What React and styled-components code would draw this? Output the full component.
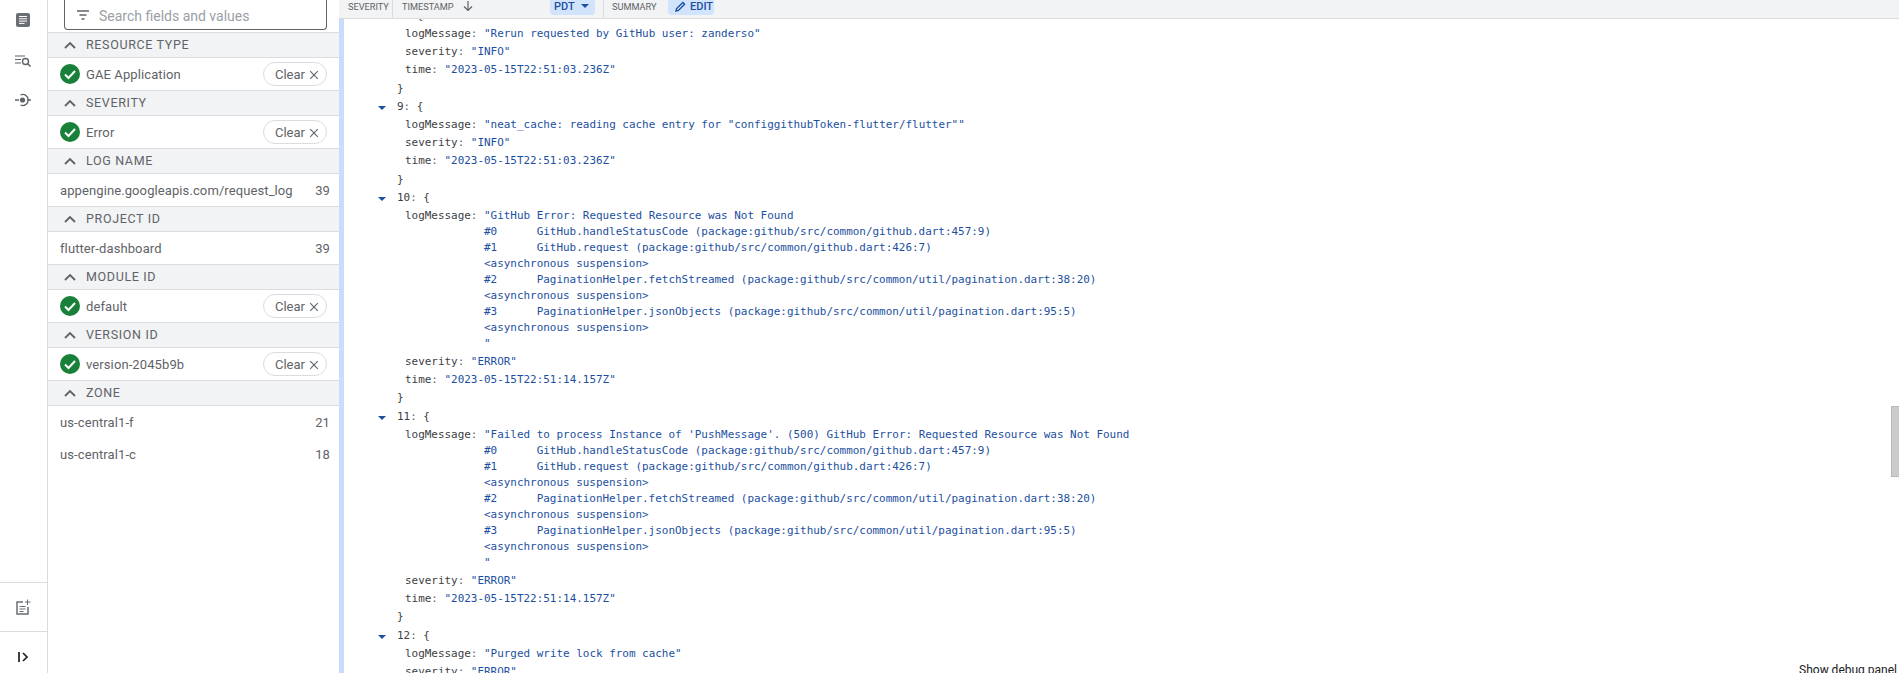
import React from 'react';
import styled, { createGlobalStyle } from 'styled-components';

const GlobalStyle = createGlobalStyle`
  html, body {
    margin: 0;
    height: 100%;
    overflow: hidden;
    background: #fff;
    font-family: Roboto, "Liberation Sans", sans-serif;
  }
  * { box-sizing: border-box; }
`

const Page = styled.div`
  position: relative;
  display: flex;
  width: 1899px;
  height: 673px;
  overflow: hidden;
`
const Rail = styled.nav`
  width: 48px;
  flex: none;
  display: flex;
  flex-direction: column;
  border-right: 1.5px solid #dadce0;
`
const RailIcon = styled.div`
  height: ${p => p.$h}px;
  display: flex;
  align-items: center;
  justify-content: center;
  padding-right: 1px;
  padding-top: ${p => p.$pt || 0}px;
  border-top: ${p => (p.$line ? '1px solid #dadce0' : 'none')};
`
const RailSpacer = styled.div`
  flex: 1;
`
const Panel = styled.aside`
  width: 291px;
  flex: none;
  display: flex;
  flex-direction: column;
`
const SearchWrap = styled.div`
  height: 32px;
  padding: 0 12px 2px 16px;
  flex: none;
`
const SearchBox = styled.div`
  height: 30px;
  border: 1px solid #5f6368;
  border-top: none;
  border-radius: 0 0 4px 4px;
  display: flex;
  align-items: center;
  padding-left: 11px;
  gap: 9px;
  color: #5f6368;
`
const SearchText = styled.span`
  font-size: 14px;
  color: #9aa0a6;
  padding-top: 2px;
`
const SectionHead = styled.div`
  height: 26px;
  background: #f1f3f4;
  border-top: 1px solid #dadce0;
  border-bottom: 1px solid #dadce0;
  display: flex;
  align-items: center;
  padding-left: 15px;
  gap: 9px;
  font-size: 12.5px;
  letter-spacing: 0.65px;
  color: #5f6368;
`
const HeadTitle = styled.span`
  margin-bottom: 2px;
`
const Row = styled.div`
  height: 32px;
  display: flex;
  align-items: center;
  padding: 0 ${p => (p.$count ? '9px' : '12px')} 0 12px;
  font-size: 13px;
  letter-spacing: 0.1px;
  color: #5f6368;
  gap: 6px;
`
const RowLabel = styled.span`
  flex: 1;
  white-space: nowrap;
`
const Count = styled.span`
  font-size: 13px;
`
const CheckIcon = styled.svg`
  flex: none;
`
const ClearChip = styled.div`
  width: 64px;
  height: 24px;
  border: 1px solid #dadce0;
  border-radius: 12px;
  display: flex;
  align-items: center;
  padding-left: 11px;
  gap: 4px;
  font-size: 13px;
  letter-spacing: 0;
  color: #5f6368;
`
const ClearX = styled.svg`
  margin-top: 2px;
`
const Main = styled.main`
  flex: 1;
  min-width: 0;
  display: flex;
  flex-direction: column;
`
const Toolbar = styled.div`
  height: 19px;
  flex: none;
  background: #f1f3f4;
  border-bottom: 1px solid #dadce0;
  display: flex;
  align-items: flex-start;
  font-size: 9.2px;
  color: #5f6368;
`
const ToolCell = styled.div`
  height: 18px;
  display: flex;
  align-items: center;
  gap: ${p => p.$gap || 0}px;
  width: ${p => p.$w}px;
  padding-left: ${p => p.$pl || 0}px;
  padding-bottom: 6px;
  border-right: ${p => (p.$line ? '1px solid #dadce0' : 'none')};
  flex: none;
`
const BluePill = styled.div`
  height: 15px;
  padding: 0 0 3px ${p => p.$pl}px;
  width: ${p => p.$w}px;
  background: #d2e3fc;
  border-radius: 0 0 4px 4px;
  display: flex;
  align-items: center;
  gap: ${p => p.$gap}px;
  color: #1c4fa0;
  font-size: 11px;
  font-weight: 500;
  flex: none;
`
const LogArea = styled.div`
  flex: 1;
  min-height: 0;
  overflow: hidden;
  border-left: 5px solid #c9dcfb;
  padding-top: 6px;
  font-family: "DejaVu Sans Mono", "Liberation Mono", monospace;
  font-size: 10.95px;
  color: #3c4043;
`
const Line = styled.div`
  height: 18.2px;
  line-height: 18.2px;
  white-space: pre;
  padding-left: ${p => (p.$indent === 'key' ? 61 : 53)}px;
  position: relative;
  margin-top: ${p => (p.$clipped ? '-18.2px' : '0')};
`
const Arrow = styled.i`
  position: absolute;
  left: 34px;
  top: 8px;
  width: 0;
  height: 0;
  border-left: 4px solid transparent;
  border-right: 4px solid transparent;
  border-top: 4px solid #1c4fa0;
`
const Colon = styled.span`
  color: #5f6368;
`
const Str = styled.span`
  color: #1c4fa0;
`
const MultiValue = styled.div`
  margin-left: 140px;
  margin-top: -1px;
  margin-bottom: 1px;
  color: #1c4fa0;
  white-space: pre;
  line-height: 16px;
`
const ScrollThumb = styled.div`
  position: absolute;
  right: 0;
  top: 406px;
  width: 8px;
  height: 71px;
  background: #cbcbcb;
  border: 1px solid #b9b9b9;
  border-right: none;
`
const DebugLink = styled.div`
  position: absolute;
  right: 2px;
  top: 662px;
  font-size: 12px;
  color: #202124;
  line-height: 16px;
  white-space: nowrap;
`

const Chevron = () => (
  <svg width="14" height="12" viewBox="0 0 14 12">
    <path d="M2 9 L7 4 L12 9" fill="none" stroke="#5f6368" strokeWidth="1.8" />
  </svg>
)

const Check = () => (
  <CheckIcon width="20" height="20" viewBox="0 0 20 20">
    <circle cx="10" cy="10" r="10" fill="#188038" />
    <path d="M5 10.5 L8.5 14 L15 7" fill="none" stroke="#fff" strokeWidth="2" />
  </CheckIcon>
)

const Clear = () => (
  <ClearChip>
    Clear
    <ClearX width="10" height="10" viewBox="0 0 10 10">
      <path d="M1.2 1.2 L8.8 8.8 M8.8 1.2 L1.2 8.8" stroke="#5f6368" strokeWidth="1.1" />
    </ClearX>
  </ClearChip>
)

const Section = ({ title, rows }) => (
  <>
    <SectionHead>
      <Chevron />
      <HeadTitle>{title}</HeadTitle>
    </SectionHead>
    {rows.map(r => (
      <Row key={r.label} $count={r.count}>
        {r.checked && <Check />}
        <RowLabel>{r.label}</RowLabel>
        {r.count ? <Count>{r.count}</Count> : <Clear />}
      </Row>
    ))}
  </>
)

const sections = [
  { title: 'RESOURCE TYPE', rows: [{ label: 'GAE Application', checked: true }] },
  { title: 'SEVERITY', rows: [{ label: 'Error', checked: true }] },
  { title: 'LOG NAME', rows: [{ label: 'appengine.googleapis.com/request_log', count: 39 }] },
  { title: 'PROJECT ID', rows: [{ label: 'flutter-dashboard', count: 39 }] },
  { title: 'MODULE ID', rows: [{ label: 'default', checked: true }] },
  { title: 'VERSION ID', rows: [{ label: 'version-2045b9b', checked: true }] },
  {
    title: 'ZONE',
    rows: [
      { label: 'us-central1-f', count: 21 },
      { label: 'us-central1-c', count: 18 },
    ],
  },
]

const trace = `#0      GitHub.handleStatusCode (package:github/src/common/github.dart:457:9)
#1      GitHub.request (package:github/src/common/github.dart:426:7)
<asynchronous suspension>
#2      PaginationHelper.fetchStreamed (package:github/src/common/util/pagination.dart:38:20)
<asynchronous suspension>
#3      PaginationHelper.jsonObjects (package:github/src/common/util/pagination.dart:95:5)
<asynchronous suspension>
"`

const Prop = ({ name, value }) => (
  <Line $indent="key">
    {name}
    <Colon>: </Colon>
    <Str>{value}</Str>
  </Line>
)

const Head = ({ n, clipped }) => (
  <Line $clipped={clipped}>
    <Arrow />
    {n}
    <Colon>: </Colon>
    {'{'}
  </Line>
)

const Close = () => <Line>{'}'}</Line>

const Entry = ({ n, message, multi, severity, time }) => (
  <>
    <Head n={n} />
    <Prop name="logMessage" value={message} />
    {multi && <MultiValue>{trace}</MultiValue>}
    <Prop name="severity" value={severity} />
    <Prop name="time" value={time} />
    <Close />
  </>
)

export default function App() {
  return (
    <Page>
      <GlobalStyle />
      <Rail>
        <RailIcon $h={40}>
          <svg width="16" height="16" viewBox="0 0 16 16">
            <rect x="1" y="1" width="14" height="14" rx="2" fill="#6b6f73" />
            <path d="M4 4.5 H12 M4 6.8 H12 M4 9.1 H12 M4 11.4 H9.5" stroke="#fff" strokeWidth="1" />
          </svg>
        </RailIcon>
        <RailIcon $h={41}>
          <svg width="18" height="14" viewBox="0 0 18 14">
            <path d="M1 2 H11 M1 5.5 H7 M1 9 H7" stroke="#5f6368" strokeWidth="1.2" />
            <circle cx="11.5" cy="7.5" r="3" fill="none" stroke="#5f6368" strokeWidth="1.4" />
            <path d="M13.7 9.7 L16.5 12.5" stroke="#5f6368" strokeWidth="1.6" />
          </svg>
        </RailIcon>
        <RailIcon $h={38}>
          <svg width="18" height="16" viewBox="0 0 18 16">
            <path d="M1 8 H5 M13 8 H17" stroke="#5f6368" strokeWidth="1.3" />
            <path d="M6.5 3 A5.5 5.5 0 1 1 6.5 13" fill="none" stroke="#5f6368" strokeWidth="1.3" />
            <circle cx="8.5" cy="8" r="2.6" fill="#5f6368" />
          </svg>
        </RailIcon>
        <RailSpacer />
        <RailIcon $h={49} $line>
          <svg width="16" height="17" viewBox="0 0 16 17">
            <path d="M8 3 H2 V15 H13 V8" fill="none" stroke="#6b6f73" strokeWidth="1.5" />
            <path d="M4.5 7.5 H10.5 M4.5 10 H10.5 M4.5 12.5 H8.5" stroke="#6b6f73" strokeWidth="1.2" />
            <path d="M12.5 0.5 V6 M10 3 H15.5" stroke="#6b6f73" strokeWidth="1" />
          </svg>
        </RailIcon>
        <RailIcon $h={42} $pt={8} $line>
          <svg width="10" height="10" viewBox="0 0 10 10">
            <path d="M1 0 V10" stroke="#3c4043" strokeWidth="2" />
            <path d="M5 1 L9 5 L5 9" fill="none" stroke="#202124" strokeWidth="1.7" />
          </svg>
        </RailIcon>
      </Rail>
      <Panel>
        <SearchWrap>
          <SearchBox>
            <svg width="14" height="10" viewBox="0 0 14 10">
              <path d="M1 1 H13 M3.5 5 H10.5 M5.5 9 H8.5" stroke="#5f6368" strokeWidth="1.4" />
            </svg>
            <SearchText>Search fields and values</SearchText>
          </SearchBox>
        </SearchWrap>
        {sections.map(s => (
          <Section key={s.title} {...s} />
        ))}
      </Panel>
      <Main>
        <Toolbar>
          <ToolCell $w={54} $pl={9} $line>SEVERITY</ToolCell>
          <ToolCell $w={157} $pl={9} $gap={8}>
            TIMESTAMP
            <svg width="12" height="12" viewBox="0 0 12 12">
              <path d="M6 1 V10.5 M2 6.5 L6 10.5 L10 6.5" fill="none" stroke="#5f6368" strokeWidth="1.2" />
            </svg>
          </ToolCell>
          <BluePill $w={45} $pl={4} $gap={6}>
            PDT
            <svg width="8" height="4" viewBox="0 0 8 4">
              <path d="M0 0 H8 L4 4 Z" fill="#1c4fa0" />
            </svg>
          </BluePill>
          <ToolCell $w={9} $line />
          <ToolCell $w={64} $pl={8}>SUMMARY</ToolCell>
          <BluePill $w={46} $pl={7} $gap={4}>
            <svg width="11" height="11" viewBox="0 0 11 11">
              <path d="M1 10 L1.6 7.6 L7.8 1.4 L9.6 3.2 L3.4 9.4 Z" fill="none" stroke="#1c4fa0" strokeWidth="1.4" />
            </svg>
            EDIT
          </BluePill>
        </Toolbar>
        <LogArea>
          <Head n="8" clipped />
          <Prop name="logMessage" value={'"Rerun requested by GitHub user: zanderso"'} />
          <Prop name="severity" value={'"INFO"'} />
          <Prop name="time" value={'"2023-05-15T22:51:03.236Z"'} />
          <Close />
          <Entry
            n="9"
            message={'"neat_cache: reading cache entry for "configgithubToken-flutter/flutter""'}
            severity={'"INFO"'}
            time={'"2023-05-15T22:51:03.236Z"'}
          />
          <Entry
            n="10"
            message={'"GitHub Error: Requested Resource was Not Found'}
            multi
            severity={'"ERROR"'}
            time={'"2023-05-15T22:51:14.157Z"'}
          />
          <Entry
            n="11"
            message={`"Failed to process Instance of 'PushMessage'. (500) GitHub Error: Requested Resource was Not Found`}
            multi
            severity={'"ERROR"'}
            time={'"2023-05-15T22:51:14.157Z"'}
          />
          <Head n="12" />
          <Prop name="logMessage" value={'"Purged write lock from cache"'} />
          <Prop name="severity" value={'"ERROR"'} />
        </LogArea>
      </Main>
      <ScrollThumb />
      <DebugLink>Show debug panel</DebugLink>
    </Page>
  );
}
